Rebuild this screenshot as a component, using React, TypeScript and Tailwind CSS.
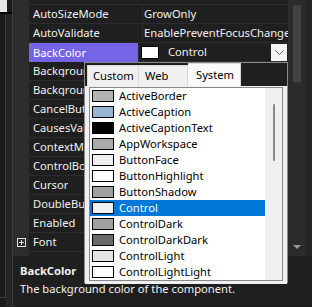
import React from "react";

// rows below the popup only show the part of the name left of it
const rows = [
  { name: "AutoSizeMode", value: "GrowOnly" },
  { name: "AutoValidate", value: "EnablePreventFocusChange" },
  { name: "BackColor", value: "Control", selected: true },
  { name: "BackgroundImage", covered: true },
  { name: "BackgroundImageLayout", covered: true },
  { name: "CancelButton", covered: true },
  { name: "CausesValidation", covered: true },
  { name: "ContextMenuStrip", covered: true },
  { name: "ControlBox", covered: true },
  { name: "Cursor", covered: true },
  { name: "DoubleBuffered", covered: true },
  { name: "Enabled", covered: true },
  { name: "Font", covered: true, expandable: true },
];

const systemColors = [
  { name: "ActiveBorder", color: "#b4b4b4" },
  { name: "ActiveCaption", color: "#99b4d1" },
  { name: "ActiveCaptionText", color: "#000000" },
  { name: "AppWorkspace", color: "#ababab" },
  { name: "ButtonFace", color: "#f0f0f0" },
  { name: "ButtonHighlight", color: "#ffffff" },
  { name: "ButtonShadow", color: "#a0a0a0" },
  { name: "Control", color: "#f0f0f0" },
  { name: "ControlDark", color: "#a0a0a0" },
  { name: "ControlDarkDark", color: "#696969" },
  { name: "ControlLight", color: "#e3e3e3" },
  { name: "ControlLightLight", color: "#ffffff" },
];

type Row = {
  name: string;
  value?: string;
  selected?: boolean;
  covered?: boolean;
  expandable?: boolean;
};

function PropRow({ row }: { row: Row }) {
  return (
    <div className="flex h-[19px] shrink-0">
      <div className="w-[16px] bg-[#2d2d30] flex items-center justify-center">
        {row.expandable && (
          <div className="w-[9px] h-[9px] border border-[#e0e0e0] relative">
            <div className="absolute left-[1px] top-[3px] w-[5px] h-[1px] bg-[#e0e0e0]" />
            <div className="absolute left-[3px] top-[1px] w-[1px] h-[5px] bg-[#e0e0e0]" />
          </div>
        )}
      </div>
      <div
        className={
          row.selected
            ? "w-[109px] h-[19px] bg-[#7664e6] text-white pl-[4px] flex items-center whitespace-nowrap overflow-hidden"
            : "w-[109px] h-[18px] bg-[#1f1f1f] text-[#f1f1f1] pl-[4px] flex items-center whitespace-nowrap overflow-hidden border-b border-[#2d2d30] box-content"
        }
      >
        <span className={row.covered ? "max-w-[52px] overflow-hidden" : ""}>{row.name}</span>
      </div>
      <div className="w-[1px] bg-[#2d2d30]" />
      <div className="flex-1 h-[18px] bg-[#1f1f1f] border-b border-[#2d2d30] box-content text-[#f1f1f1] pl-[1px] flex items-center whitespace-nowrap overflow-hidden">
        {row.selected ? (
          <>
            <div className="ml-[1px] w-[18px] h-[13px] bg-white border border-black" />
            <span className="ml-[9px]">{row.value}</span>
            <div className="ml-auto mr-[1px] w-[16px] h-[17px] bg-[#f5f5f5] flex items-center justify-center">
              <svg width="9" height="5" viewBox="0 0 9 5">
                <path d="M0.5 0.5 L4.5 4.5 L8.5 0.5" fill="none" stroke="#606060" strokeWidth="1" />
              </svg>
            </div>
          </>
        ) : (
          row.value
        )}
      </div>
    </div>
  );
}

function ColorPopup() {
  return (
    <div className="absolute left-[84px] top-[62px] w-[204px] h-[221px] border border-[#8a8a8a] bg-[#1f1f1f] flex flex-col text-black">
      <div className="flex h-[23px] items-end">
        <div className="ml-[2px] w-[52px] h-[21px] bg-[#f0f0f0] border border-[#d9d9d9] border-b-0 flex items-center pl-[5px]">
          Custom
        </div>
        <div className="w-[49px] h-[21px] bg-[#f0f0f0] border-r border-t border-[#d9d9d9] flex items-center pl-[6px]">
          Web
        </div>
        <div className="w-[53px] h-[23px] bg-[#f9f9f9] border-r border-t border-[#d9d9d9] flex items-center pl-[8px]">
          System
        </div>
      </div>
      <div className="flex-1 bg-[#f0f0f0] pl-[4px] pr-[4px] pt-[1px] pb-[3px] flex">
        <div className="flex-1 bg-white border border-[#828790] flex overflow-hidden">
          <div className="flex-1 flex flex-col">
            {systemColors.map((c) => (
              <div
                key={c.name}
                className={
                  c.name === "Control"
                    ? "h-[16px] shrink-0 flex items-center bg-[#0078d7] text-white"
                    : "h-[16px] shrink-0 flex items-center"
                }
              >
                <div
                  className="ml-[2px] w-[22px] h-[12px] border border-black"
                  style={{ backgroundColor: c.color }}
                />
                <span className="ml-[5px] whitespace-nowrap">{c.name}</span>
              </div>
            ))}
          </div>
          <div className="w-[17px] bg-[#f0f0f0] flex justify-center pt-[16px]">
            <div className="w-[2px] h-[57px] bg-[#8a8a8a] rounded-full" />
          </div>
        </div>
      </div>
    </div>
  );
}

export default function App() {
  return (
    <div
      className="relative w-[312px] h-[307px] bg-[#1f1f1f] flex overflow-hidden text-[11.2px] leading-none"
      style={{ fontFamily: '"Noto Sans", "Liberation Sans", sans-serif' }}
    >
      <div className="w-[12px] flex flex-col bg-[#1b1b1b]">
        <div className="h-[12px] w-[7px] bg-[#e6e6e6]" />
        <div className="h-[2px] bg-black" />
        <div className="flex-1 flex">
          <div className="w-[6px] h-[284px] border-r border-[#3c3c3c] border-b" />
          <div className="flex-1 bg-[#252526]" />
        </div>
      </div>
      <div className="flex-1 flex flex-col border-l border-[#3c3c3c]">
        <div className="h-[256px] flex">
          <div className="w-[275px] flex flex-col bg-[#2d2d30]">
            <div className="h-[5px] flex shrink-0">
              <div className="w-[16px]" />
              <div className="w-[109px] h-[4px] bg-[#1f1f1f]" />
              <div className="w-[1px]" />
              <div className="flex-1 h-[4px] bg-[#1f1f1f]" />
            </div>
            {rows.map((r) => (
              <PropRow key={r.name} row={r} />
            ))}
            <div className="flex-1 flex">
              <div className="w-[16px]" />
              <div className="flex-1 bg-[#1f1f1f]" />
            </div>
          </div>
          <div className="w-[17px] bg-[#2b2b2b] flex flex-col items-center">
            <div className="mt-[5px] w-[8px] h-[77px] bg-[#424242]" />
            <div className="mt-auto mb-[7px] w-0 h-0 border-l-[4px] border-r-[4px] border-t-[4px] border-l-transparent border-r-transparent border-t-[#9a9a9a]" />
          </div>
          <div className="flex-1 bg-[#252526]" />
        </div>
        <div className="flex-1 bg-[#1f1f1f] pl-[7px] pt-[6px] text-[#f1f1f1]">
          <div className="font-bold h-[18px] flex items-center">BackColor</div>
          <div className="h-[18px] flex items-center whitespace-nowrap">The background color of the component.</div>
        </div>
      </div>
      <ColorPopup />
    </div>
  );
}
